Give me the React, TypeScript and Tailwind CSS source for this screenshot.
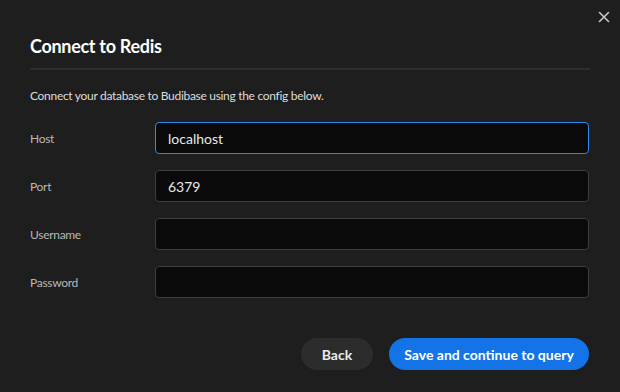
import React from "react";

const fields = [
  { label: "Host", value: "localhost", focused: true },
  { label: "Port", value: "6379" },
  { label: "Username", value: "" },
  { label: "Password", value: "" },
];

export default function App() {
  return (
    <div
      className="relative w-[620px] h-[392px] bg-[#1e1e1e] text-[#e0e0e0] overflow-hidden"
      style={{ fontFamily: "Lato, 'Open Sans', sans-serif" }}
    >
      <button className="absolute right-[10px] top-[11px] w-[12px] h-[12px] flex items-center justify-center text-[#c8c8c8]">
        <svg width="12" height="12" viewBox="0 0 12 12" fill="none" stroke="currentColor" strokeWidth="1.6" strokeLinecap="round">
          <path d="M1.5 1.5 L10.5 10.5 M10.5 1.5 L1.5 10.5" />
        </svg>
      </button>
      <div className="px-[30px] pt-[34px]">
        <h1 className="text-[18px] font-bold text-white leading-[24px] tracking-[-0.3px]">Connect to Redis</h1>
        <div className="mt-[10px] h-[2px] bg-[#2e2e2e]" />
        <p className="mt-[18px] text-[12px] leading-[16px] text-[#dcdcdc] tracking-[-0.3px]">
          Connect your database to Budibase using the config below.
        </p>
        <div className="mt-[18px] flex flex-col gap-[16px]">
          {fields.map((f) => (
            <div key={f.label} className="flex items-center">
              <div className="w-[125px] text-[12px] text-[#b8b8b8] tracking-[-0.3px] pt-[2px]">{f.label}</div>
              <div
                className={
                  "flex-1 mr-[1px] h-[32px] rounded-[4px] bg-[#0a0a0a] flex items-center px-[12px] text-[14px] text-[#e8e8e8] border " +
                  (f.focused ? "border-[#2f86eb]" : "border-[#3e3e3e]")
                }
              >
                {f.value}
              </div>
            </div>
          ))}
        </div>
        <div className="mt-[40px] flex justify-end gap-[16px] mr-[1px]">
          <button className="h-[32px] w-[72px] rounded-full bg-[#2c2c2c] text-[14px] font-bold text-[#eaeaea]">
            Back
          </button>
          <button className="h-[32px] w-[200px] rounded-full bg-[#1473e6] text-[14px] font-bold text-white">
            Save and continue to query
          </button>
        </div>
      </div>
    </div>
  );
}
